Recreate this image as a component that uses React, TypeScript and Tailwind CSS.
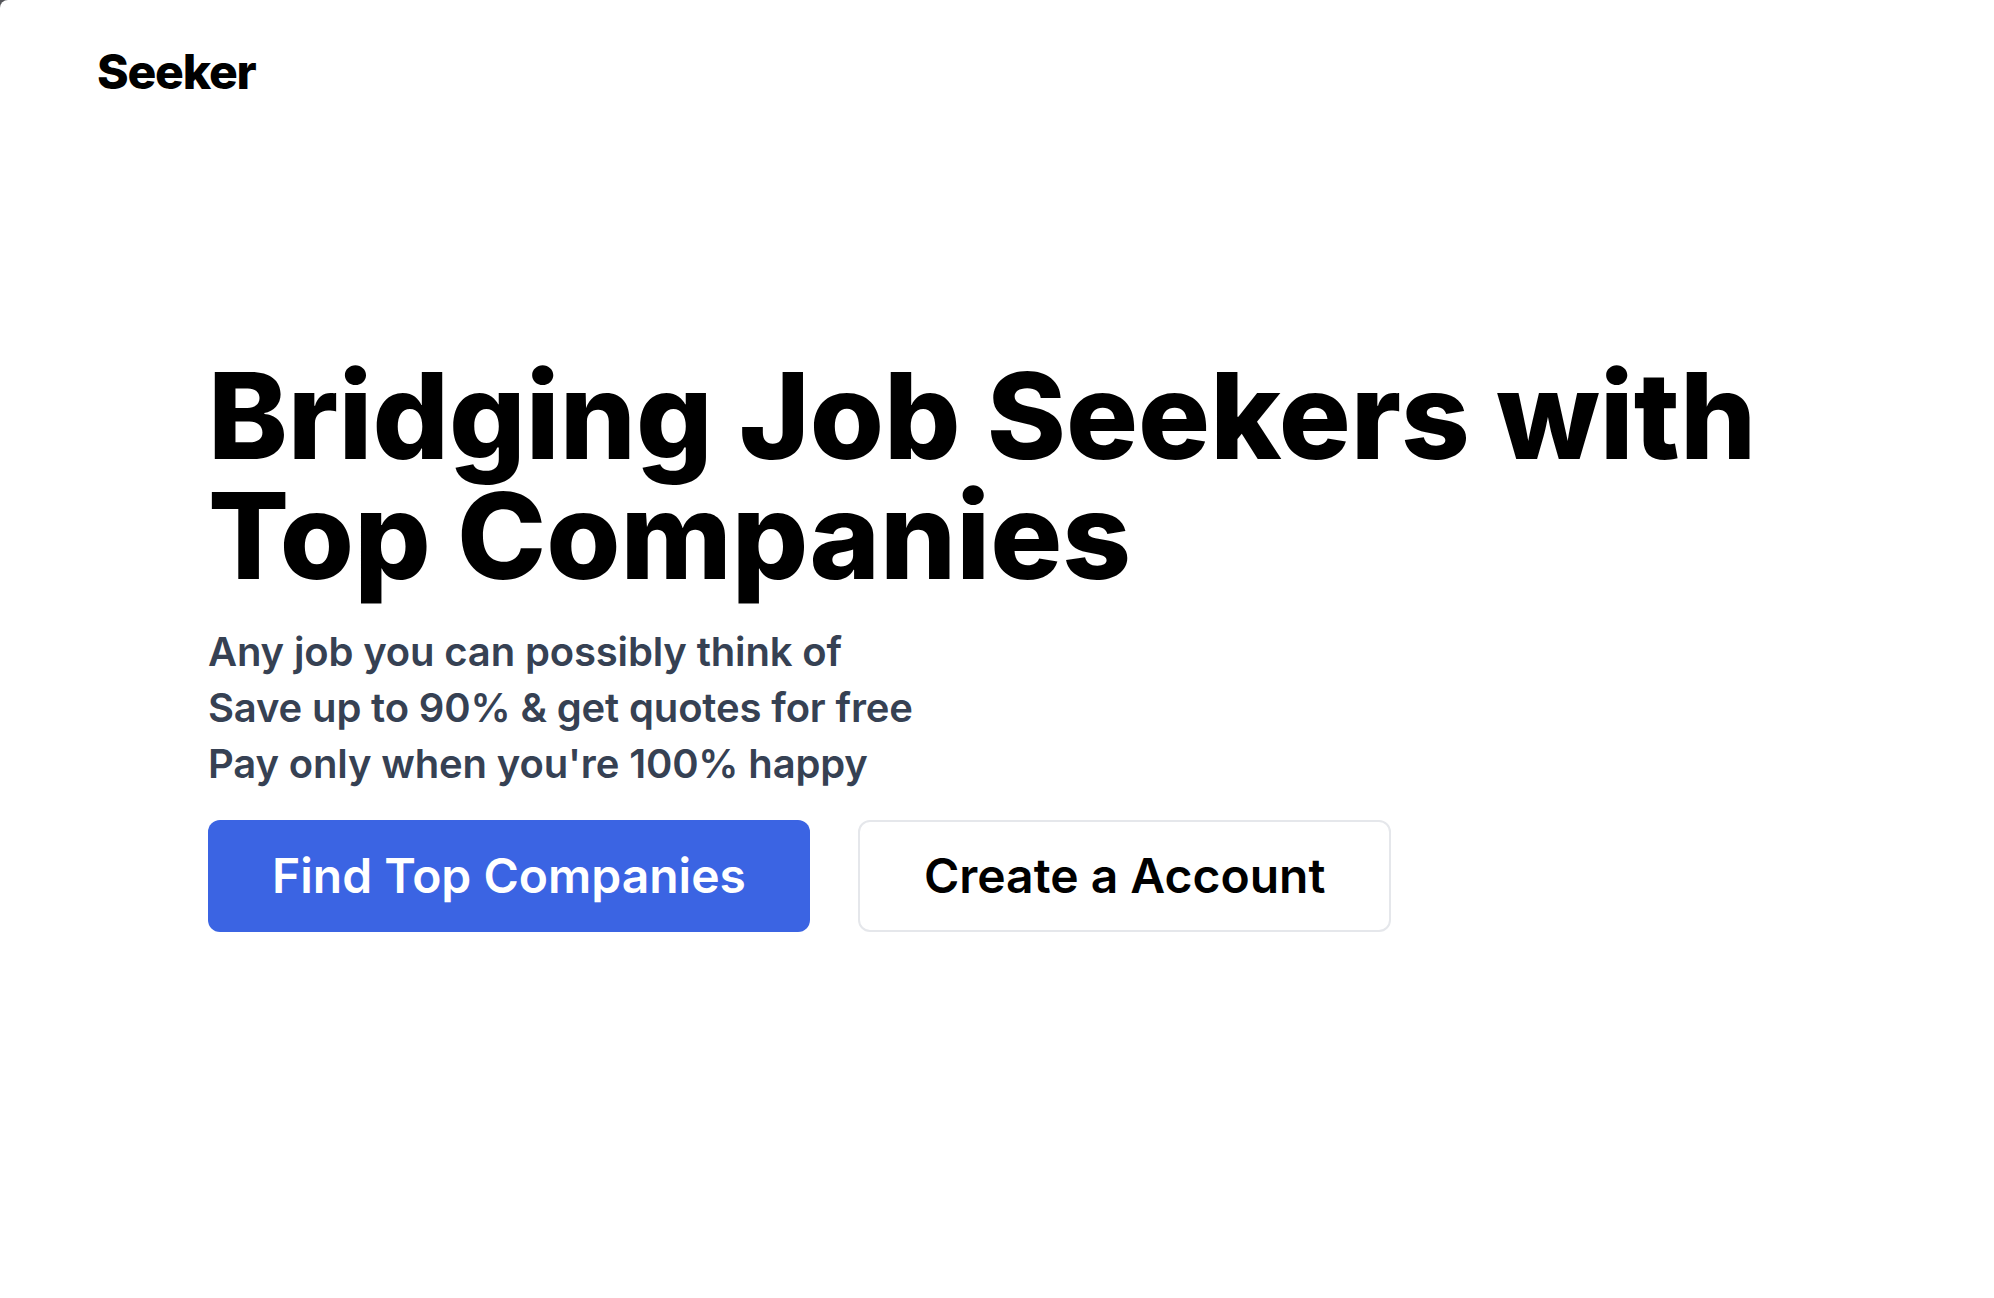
const App = () => {
  return (
    <div className="bg-[#55565a] min-h-screen" style={{ fontFamily: "Inter, 'Noto Sans', sans-serif" }}>
      <div className="bg-white min-h-screen rounded-tl-[8px]">

        {/* Header */}
        <header className="px-[97px] pt-[48px]">
          <h1 className="text-[48px] leading-[48px] font-extrabold tracking-tight text-black">Seeker</h1>
        </header>

        {/* Hero */}
        <section className="pl-[208px] pt-[260px]">
          <h2 className="text-[120px] leading-[120px] font-extrabold text-black">
            Bridging Job Seekers with
            <br />
            Top Companies
          </h2>

          <div className="mt-[28px] text-[40px] leading-[56px] font-semibold text-gray-700 tracking-[-0.15px]">
            <p>Any job you can possibly think of</p>
            <p>Save up to 90% &amp; get quotes for free</p>
            <p>Pay only when you're 100% happy</p>
          </div>

          <div className="flex gap-[48px] mt-[28px]">
            <button className="bg-[#3b64e3] text-white text-[48px] leading-[64px] font-semibold px-[64px] py-[24px] rounded-[12px]">
              Find Top Companies
            </button>
            <button className="bg-white text-black text-[48px] leading-[64px] font-semibold px-[64px] py-[22px] rounded-[12px] border-2 border-gray-200">
              Create a Account
            </button>
          </div>
        </section>

      </div>
    </div>
  );
};

export default App;
